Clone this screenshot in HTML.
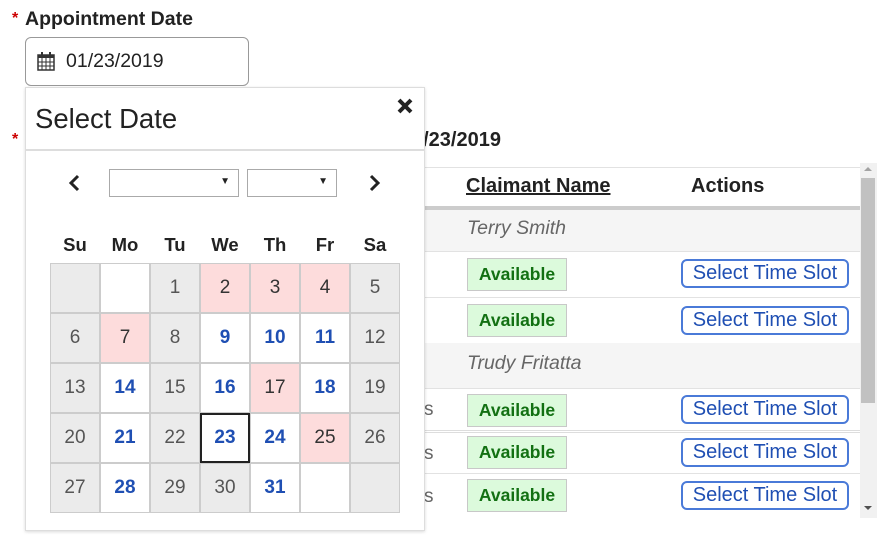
<!DOCTYPE html>
<html><head><meta charset="utf-8"><style>
*{box-sizing:border-box;margin:0;padding:0}
body{width:883px;height:543px;background:#fff;font-family:"Liberation Sans",Arial,sans-serif;position:relative;overflow:hidden;color:#222}
.a{position:absolute}
.star{color:#c00;font-weight:bold;font-size:16px}
.lbl{font-weight:bold;font-size:20px;color:#222}
.row{position:absolute;left:424px;width:436px;border-bottom:1px solid #e2e2e2}
.badge{position:absolute;left:467px;width:100px;height:33px;background:#dcfadc;border:1px solid #c8c8c8;color:#127012;font-weight:bold;font-size:17.5px;text-align:center;line-height:30px}
.btn{position:absolute;left:681px;width:168px;height:29px;border:2px solid #4a7ad8;border-radius:6px;color:#1f4fb3;font-size:20px;text-align:center;line-height:25px;background:#fff}
.cell{position:absolute;width:50px;height:50px;border:1px solid #ccc;text-align:center;line-height:48px;font-size:19px;color:#555}
.g{background:#ebebeb}.p{background:#fddcdc;color:#333}.w{background:#fff}.b{color:#1f4fb3;font-weight:bold}
.s{position:absolute;font-size:19px;color:#666}
</style></head><body>
<div class="a star" style="left:12px;top:10px">*</div>
<div class="a lbl" style="left:25px;top:8px;font-size:19.5px">Appointment Date</div>
<div class="a" style="left:25px;top:37px;width:224px;height:49px;border:1px solid #999;border-radius:6px"></div>
<svg class="a" style="left:37px;top:51px" width="18" height="20" viewBox="0 0 18 20"><rect x="1" y="4" width="16" height="15" fill="none" stroke="#333" stroke-width="1.5"/><rect x="1" y="4" width="16" height="3" fill="#333"/><path d="M1 11H17M1 15H17M5 7V19M9 7V19M13 7V19" stroke="#333" stroke-width="1"/><rect x="4" y="1" width="2" height="5" fill="#333"/><rect x="12" y="1" width="2" height="5" fill="#333"/></svg>
<div class="a" style="left:66px;top:50px;font-size:19.5px;color:#222">01/23/2019</div>
<div class="a star" style="left:12px;top:131px">*</div>
<div class="a lbl" style="left:412px;top:129px">1/23/2019</div>
<!-- table -->
<div class="a" style="left:424px;top:167px;width:436px;height:1px;background:#e2e2e2"></div>
<div class="a lbl" style="left:466px;top:175px;text-decoration:underline">Claimant Name</div>
<div class="a lbl" style="left:691px;top:175px">Actions</div>
<div class="a" style="left:424px;top:206px;width:436px;height:4px;background:#ccc"></div>
<div class="row" style="top:210px;height:42px;background:#f5f5f5"></div>
<div class="a" style="left:467px;top:217px;font-style:italic;font-size:19.5px;color:#666">Terry Smith</div>
<div class="row" style="top:252px;height:46px"></div>
<div class="row" style="top:298px;height:45px;border:none"></div>
<div class="row" style="top:343px;height:46px;background:#f5f5f5"></div>
<div class="a" style="left:467px;top:352px;font-style:italic;font-size:19.5px;color:#666">Trudy Fritatta</div>
<div class="row" style="top:389px;height:44px;border-bottom:3px double #ddd"></div>
<div class="row" style="top:433px;height:41px"></div>
<div class="s" style="left:424px;top:399px">s</div><div class="s" style="left:424px;top:443px">s</div><div class="s" style="left:424px;top:486px">s</div>
<div class="badge" style="top:258px">Available</div><div class="btn" style="top:259px">Select Time Slot</div>
<div class="badge" style="top:304px">Available</div><div class="btn" style="top:306px">Select Time Slot</div>
<div class="badge" style="top:394px">Available</div><div class="btn" style="top:395px">Select Time Slot</div>
<div class="badge" style="top:436px">Available</div><div class="btn" style="top:438px">Select Time Slot</div>
<div class="badge" style="top:479px">Available</div><div class="btn" style="top:481px">Select Time Slot</div>
<div class="a" style="left:860px;top:163px;width:17px;height:355px;background:#f1f1f1"></div>
<div class="a" style="left:861px;top:178px;width:14px;height:225px;background:#c1c1c1"></div>
<div class="a" style="left:864px;top:167px;width:0;height:0;border:4px solid transparent;border-bottom:4px solid #a3a3a3;border-top:0"></div>
<div class="a" style="left:864px;top:506px;width:0;height:0;border:4px solid transparent;border-top:4px solid #505050;border-bottom:0"></div>
<!-- popup -->
<div class="a" style="left:25px;top:87px;width:400px;height:444px;background:#fff;border:1px solid #ddd;box-shadow:0 1px 3px rgba(0,0,0,.15)"></div>
<div class="a" style="left:35px;top:103px;font-size:27.5px;color:#222">Select Date</div>
<svg class="a" style="left:396px;top:97px" width="18" height="18"><path d="M3 3L15 15M15 3L3 15" stroke="#222" stroke-width="4"/></svg>
<div class="a" style="left:26px;top:149px;width:398px;height:2px;background:#ddd"></div>
<svg class="a" style="left:68px;top:174px" width="14" height="18"><path d="M10 2L3 9L10 16" fill="none" stroke="#222" stroke-width="3"/></svg>
<svg class="a" style="left:367px;top:174px" width="14" height="18"><path d="M4 2L11 9L4 16" fill="none" stroke="#222" stroke-width="3"/></svg>
<div class="a" style="left:109px;top:169px;width:130px;height:28px;border:1px solid #aaa"><span class="a" style="right:8px;top:6px;font-size:10px">▼</span></div>
<div class="a" style="left:247px;top:169px;width:90px;height:28px;border:1px solid #aaa"><span class="a" style="right:8px;top:6px;font-size:10px">▼</span></div>
<div class="a" style="left:50px;top:234px;width:350px;display:flex;font-weight:bold;font-size:18.5px;color:#222">
<span style="width:50px;text-align:center">Su</span><span style="width:50px;text-align:center">Mo</span><span style="width:50px;text-align:center">Tu</span><span style="width:50px;text-align:center">We</span><span style="width:50px;text-align:center">Th</span><span style="width:50px;text-align:center">Fr</span><span style="width:50px;text-align:center">Sa</span></div>
<div class="a" style="left:50px;top:263px;width:350px;height:250px;background:#ccc"></div>
<div class="cell g" style="left:50px;top:263px"></div><div class="cell w" style="left:100px;top:263px"></div><div class="cell g" style="left:150px;top:263px">1</div><div class="cell p" style="left:200px;top:263px">2</div><div class="cell p" style="left:250px;top:263px">3</div><div class="cell p" style="left:300px;top:263px">4</div><div class="cell g" style="left:350px;top:263px">5</div>
<div class="cell g" style="left:50px;top:313px">6</div><div class="cell p" style="left:100px;top:313px">7</div><div class="cell g" style="left:150px;top:313px">8</div><div class="cell w b" style="left:200px;top:313px">9</div><div class="cell w b" style="left:250px;top:313px">10</div><div class="cell w b" style="left:300px;top:313px">11</div><div class="cell g" style="left:350px;top:313px">12</div>
<div class="cell g" style="left:50px;top:363px">13</div><div class="cell w b" style="left:100px;top:363px">14</div><div class="cell g" style="left:150px;top:363px">15</div><div class="cell w b" style="left:200px;top:363px">16</div><div class="cell p" style="left:250px;top:363px">17</div><div class="cell w b" style="left:300px;top:363px">18</div><div class="cell g" style="left:350px;top:363px">19</div>
<div class="cell g" style="left:50px;top:413px">20</div><div class="cell w b" style="left:100px;top:413px">21</div><div class="cell g" style="left:150px;top:413px">22</div><div class="cell w b" style="left:200px;top:413px;border:2px solid #222;line-height:46px">23</div><div class="cell w b" style="left:250px;top:413px">24</div><div class="cell p" style="left:300px;top:413px">25</div><div class="cell g" style="left:350px;top:413px">26</div>
<div class="cell g" style="left:50px;top:463px">27</div><div class="cell w b" style="left:100px;top:463px">28</div><div class="cell g" style="left:150px;top:463px">29</div><div class="cell g" style="left:200px;top:463px">30</div><div class="cell w b" style="left:250px;top:463px">31</div><div class="cell w" style="left:300px;top:463px"></div><div class="cell g" style="left:350px;top:463px"></div>
</body></html>
